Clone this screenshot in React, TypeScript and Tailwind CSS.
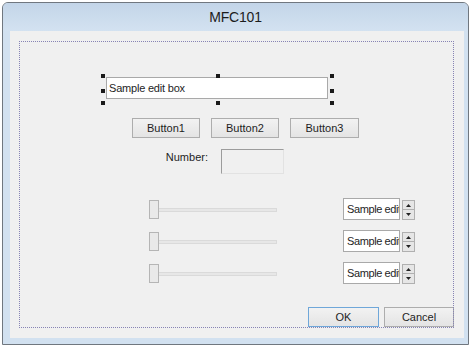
import React from 'react';

// --- Dialog editor canvas (MFC resource view) ---

const FONT = { fontFamily: '"Liberation Sans", Arial, sans-serif' };

// selection grips around the edit box, relative to the box
const GRIPS = [
  [-6, -4], [109, -4], [223, -4],
  [-6, 11], [223, 11],
  [-6, 23], [109, 23], [223, 23],
];

function Button({ w, label, isDefault }: { w: string; label: string; isDefault?: boolean }) {
  return (
    <div
      className={
        'h-[20px] flex items-center justify-center text-[11px] text-[#1e1e1e] bg-gradient-to-b from-[#f2f2f2] to-[#e4e4e4] border ' +
        (isDefault ? 'border-[#6fa7d9]' : 'border-[#adadad]') + ' ' + w
      }
    >
      {label}
    </div>
  );
}

function Slider() {
  return (
    <div className="relative w-[128px] h-[19px]">
      <div className="absolute left-[1px] right-0 top-[8px] h-[4px] bg-[#e7e7e7] border border-[#dadada]" />
      <div className="absolute left-0 top-0 w-[10px] h-[19px] bg-[#e9e9e9] border border-[#b5b5b5]" />
    </div>
  );
}

function SpinEdit() {
  return (
    <div className="flex items-start gap-[2px]">
      <div className="w-[57px] h-[22px] bg-white border border-[#a9a9a9] overflow-hidden whitespace-nowrap pl-[3px] text-[11px] leading-[20px] text-[#1e1e1e] tracking-[-0.4px]">
        Sample edit
      </div>
      <div className="flex flex-col mt-[2px]">
        <div className="w-[13px] h-[10px] bg-[#e6e6e6] border border-[#b0b0b0] flex items-center justify-center">
          <svg width="5" height="3" viewBox="0 0 5 3"><path d="M2.5 0L5 3H0Z" fill="#222" /></svg>
        </div>
        <div className="w-[13px] h-[10px] bg-[#e6e6e6] border border-t-0 border-[#b0b0b0] flex items-center justify-center">
          <svg width="5" height="3" viewBox="0 0 5 3"><path d="M0 0H5L2.5 3Z" fill="#222" /></svg>
        </div>
      </div>
    </div>
  );
}

export default function App() {
  return (
    <div className="w-[474px] h-[350px] bg-white pt-[2px] pl-[2px]" style={FONT}>
      <div className="w-[467px] h-[343px] border border-[#70777f] rounded-t-[6px] bg-[#d2e1f0] flex flex-col overflow-hidden">
        {/* Title bar */}
        <div className="h-[28px] flex items-center justify-center bg-gradient-to-b from-[#c3d5e8] to-[#d3e2f1] text-[14px] text-[#1c1c1c] tracking-[-0.2px]">
          MFC101
        </div>

        {/* Client area */}
        <div className="flex-1 pl-[7px] pr-[4px] pb-[6px]">
          <div className="relative h-full bg-[#f0f0f0] flex flex-col pt-[46px]">
            {/* dialog bounds guide */}
            <div className="absolute left-[9px] top-[10px] w-[435px] h-[287px] border border-dotted border-[#8784b4]" />

            {/* selected edit box */}
            <div className="pl-[96px]">
              <div className="relative w-[222px] h-[22px] bg-white border border-[#a9a9a9] pl-[2px] text-[11px] leading-[20px] text-[#1e1e1e] tracking-[-0.2px]">
                Sample edit box
                {GRIPS.map(([x, y], i) => (
                  <div key={i} className="absolute w-[4px] h-[4px] bg-[#1a1a1a]" style={{ left: x, top: y }} />
                ))}
              </div>
            </div>

            <div className="mt-[19px] pl-[122px] flex gap-[11px]">
              <Button w="w-[68px]" label="Button1" />
              <Button w="w-[68px]" label="Button2" />
              <Button w="w-[69px]" label="Button3" />
            </div>

            <div className="mt-[11px] pl-[150px] flex items-start">
              <div className="w-[48px] mt-[1px] text-right text-[11px] leading-[14px] text-[#1e1e1e]">Number:</div>
              <div className="ml-[13px] w-[63px] h-[25px] bg-[#f0f0f0] border border-t-[#9c9c9c] border-l-[#9c9c9c] border-r-[#e2e2e2] border-b-[#e2e2e2]" />
            </div>

            <div className="mt-[24px] pl-[139px] flex items-start gap-[66px]">
              <div className="mt-[2px] flex flex-col gap-[13px]">
                <Slider />
                <Slider />
                <Slider />
              </div>
              <div className="flex flex-col gap-[10px]">
                <SpinEdit />
                <SpinEdit />
                <SpinEdit />
              </div>
            </div>

            <div className="mt-[23px] pr-[10px] flex justify-end gap-[5px]">
              <Button w="w-[71px]" label="OK" isDefault />
              <Button w="w-[70px]" label="Cancel" />
            </div>
          </div>
        </div>
      </div>
    </div>
  );
}
